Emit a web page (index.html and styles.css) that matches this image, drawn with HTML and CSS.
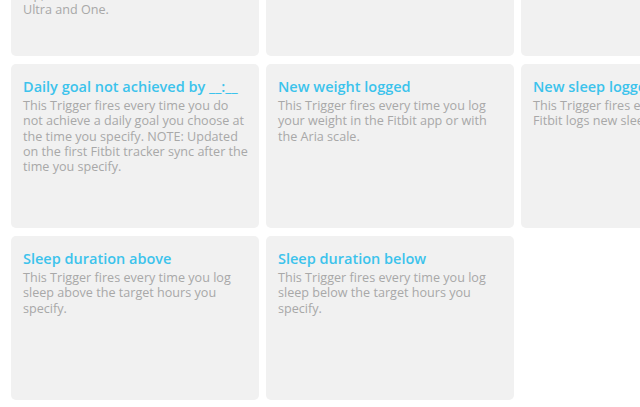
FILE: index.html
```html
<!DOCTYPE html>
<html>
<head>
    <title>Fitbit Triggers</title>
    <link rel="stylesheet" href="styles.css">
</head>
<body>
    <div class="triggers">
        <div class="trigger">
            <h3>Daily activity summary</h3>
            <p>This Trigger fires every day at 11:15pm with a summary of your activity for the day. NOTE: Works with Fitbit Surge, Charge HR, Charge, Flex, Zip,<br>Ultra and One.</p>
        </div>
        <div class="trigger">
            <h3>Daily goal achieved</h3>
            <p>This Trigger fires when you achieve a daily goal you choose.</p>
        </div>
        <div class="trigger">
            <h3>Daily step goal</h3>
            <p>This Trigger fires when you reach your daily step goal.</p>
        </div>

        <div class="trigger">
            <h3>Daily goal not achieved by __:__</h3>
            <p>This Trigger fires every time you do not achieve a daily goal you choose at the time you specify. NOTE: Updated on the first Fitbit tracker sync after the time you specify.</p>
        </div>
        <div class="trigger">
            <h3>New weight logged</h3>
            <p>This Trigger fires every time you log your weight in the Fitbit app or with the Aria scale.</p>
        </div>
        <div class="trigger">
            <h3>New sleep logged</h3>
            <p>This Trigger fires every time your<br>Fitbit logs new sleep.</p>
        </div>

        <div class="trigger">
            <h3>Sleep duration above</h3>
            <p>This Trigger fires every time you log sleep above the target hours you specify.</p>
        </div>
        <div class="trigger">
            <h3>Sleep duration below</h3>
            <p>This Trigger fires every time you log sleep below the target hours you specify.</p>
        </div>
    </div>
</body>
</html>
```

FILE: styles.css
```css
body {
    margin: 0;
    background: #fff;
    font-family: "Open Sans", Arial, sans-serif;
    overflow: hidden;
}
.triggers {
    display: grid;
    grid-template-columns: repeat(3, 248px);
    grid-auto-rows: 164px;
    gap: 8px 7px;
    margin-top: -108px;
    padding-left: 11px;
}
.trigger {
    background: #f1f1f1;
    border-radius: 5px;
    padding: 14px 11px 14px 12px;
}
.trigger h3 {
    margin: 0;
    font-size: 14.5px;
    line-height: 17px;
    font-weight: 600;
    color: #3cc3ec;
    white-space: nowrap;
}
.trigger p {
    margin: 3px 0 0;
    font-size: 12.6px;
    line-height: 15.3px;
    color: #a8a8a8;
}
```
